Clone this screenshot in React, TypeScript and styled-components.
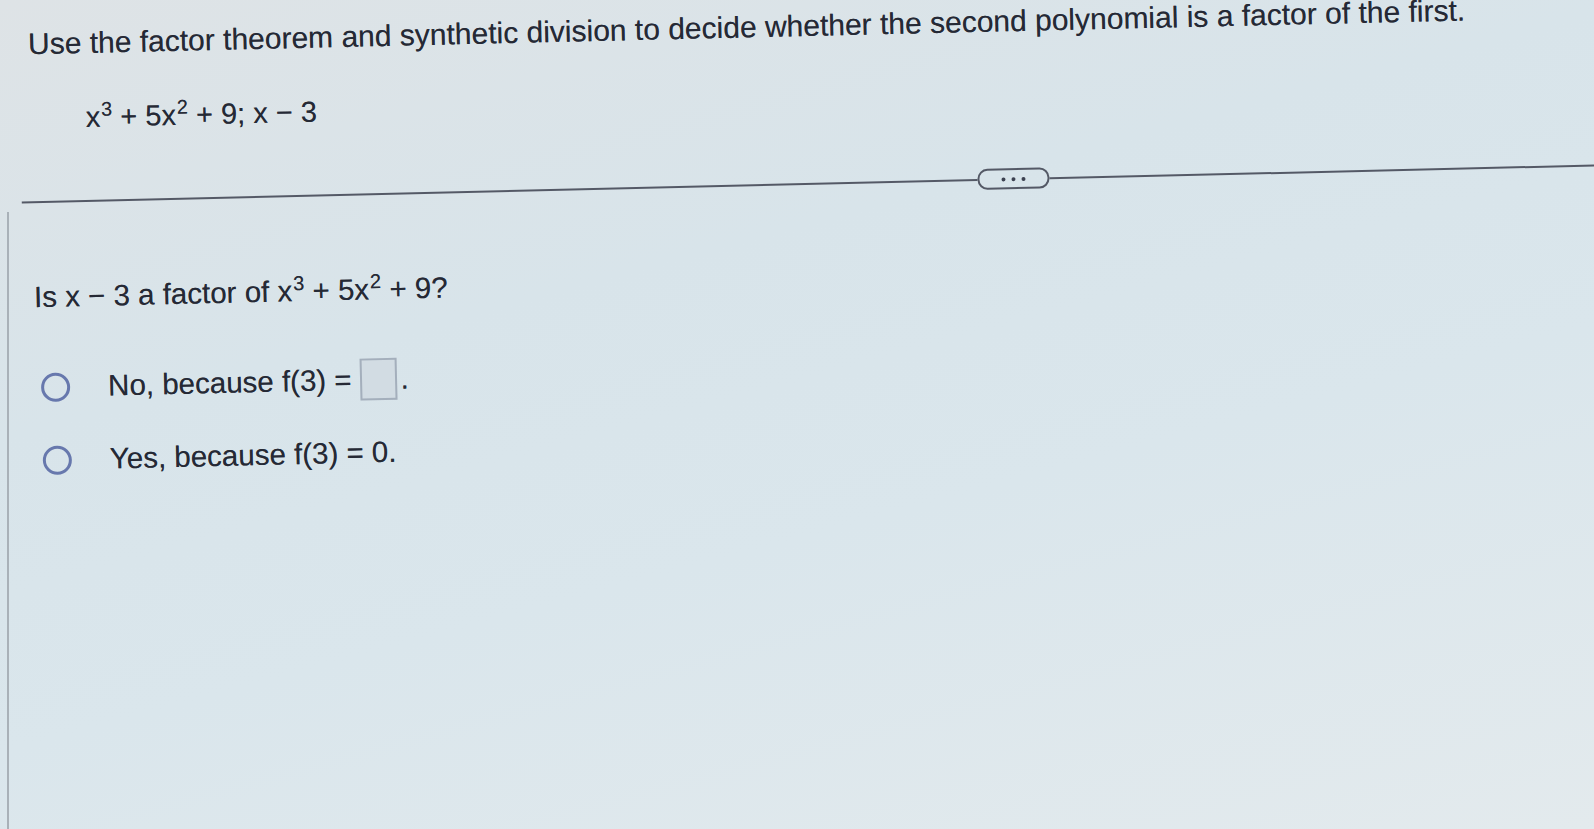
import React from "react";
import styled, { createGlobalStyle } from "styled-components";

const GlobalStyle = createGlobalStyle`
  html, body {
    margin: 0;
    padding: 0;
    height: 100%;
    overflow: hidden;
  }
  body {
    background: linear-gradient(165deg, #dee3e6 0%, #d8e4ea 35%, #dae6ec 60%, #e3eaed 100%);
    font-family: "Liberation Sans", Arial, sans-serif;
    color: #252935;
  }
`;

const Page = styled.div`
  position: relative;
  width: 1594px;
  height: 829px;
  overflow: hidden;

  &::before {
    content: "";
    position: absolute;
    left: 7px;
    top: 212px;
    bottom: 0;
    width: 2px;
    background: #a9b1b8;
  }
`;

const Sheet = styled.div`
  display: flex;
  flex-direction: column;
  width: 1660px;
  padding: 27px 0 0 27px;
  transform: rotate(-1.35deg);
  transform-origin: 0 0;
  text-shadow: 0 0 0.4px rgba(37, 41, 53, 0.6);
`;

const Heading = styled.div`
  font-size: 30px;
  line-height: 36px;
  white-space: nowrap;
`;

const Formula = styled.div`
  margin: 38px 0 0 56px;
  font-size: 29px;
  line-height: 36px;
`;

const Sup = styled.sup`
  font-size: 0.68em;
  line-height: 0;
  vertical-align: 0.55em;
  margin-left: 1px;
`;

const Divider = styled.div`
  display: flex;
  align-items: center;
  margin: 55px 0 0 -10px;
`;

const Line = styled.div<{ grow?: boolean }>`
  height: 2px;
  background: #545966;
  ${(p) => (p.grow ? "flex: 1;" : "width: 956px;")}
`;

const Pill = styled.div`
  display: flex;
  align-items: center;
  justify-content: center;
  gap: 6px;
  width: 68px;
  height: 17px;
  border: 2px solid #545966;
  border-radius: 10px;
`;

const Dot = styled.span`
  width: 4px;
  height: 4px;
  border-radius: 50%;
  background: #3c4150;
`;

const Question = styled.div`
  margin: 67px 0 0 0;
  font-size: 29.5px;
  line-height: 36px;
`;

const Options = styled.div`
  display: flex;
  flex-direction: column;
  gap: 31px;
  margin: 51px 0 0 5px;
`;

const Option = styled.label`
  display: flex;
  align-items: center;
  font-size: 29.5px;
  line-height: 42px;
`;

const Radio = styled.span`
  box-sizing: border-box;
  width: 29px;
  height: 29px;
  border-radius: 50%;
  border: 3px solid #6778ad;
  margin-right: 38px;
  flex-shrink: 0;
`;

const AnswerBox = styled.span`
  display: inline-block;
  box-sizing: border-box;
  width: 37px;
  height: 42px;
  margin: 0 4px 0 8px;
  border: 2px solid #a4afbc;
  background: #d2dce3;
`;

const Text = styled.span`
  display: inline-flex;
  align-items: center;
`;

export default function App() {
  return (
    <>
      <GlobalStyle />
      <Page>
        <Sheet>
          <Heading>
            Use the factor theorem and synthetic division to decide whether the second
            polynomial is a factor of the first.
          </Heading>
          <Formula>
            x<Sup>3</Sup> + 5x<Sup>2</Sup> + 9; x − 3
          </Formula>
          <Divider>
            <Line />
            <Pill>
              <Dot />
              <Dot />
              <Dot />
            </Pill>
            <Line grow />
          </Divider>
          <Question>
            Is x − 3 a factor of x<Sup>3</Sup> + 5x<Sup>2</Sup> + 9?
          </Question>
          <Options>
            <Option>
              <Radio />
              <Text>
                No, because f(3) =<AnswerBox />.
              </Text>
            </Option>
            <Option>
              <Radio />
              <Text>Yes, because f(3) = 0.</Text>
            </Option>
          </Options>
        </Sheet>
      </Page>
    </>
  );
}
